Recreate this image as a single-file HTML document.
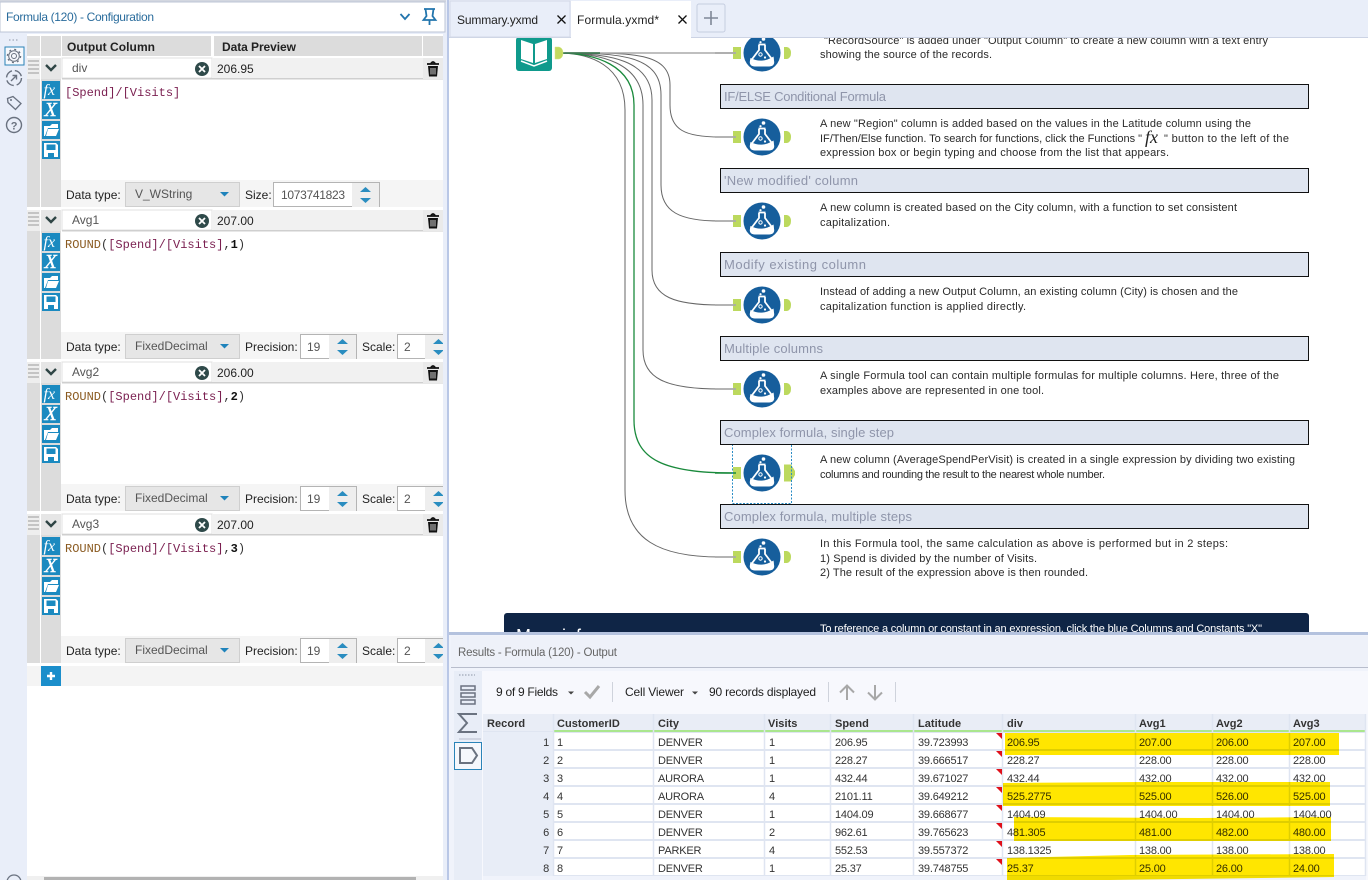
<!DOCTYPE html>
<html><head><meta charset="utf-8"><title>Formula</title>
<style>
html,body{margin:0;padding:0;background:#fff;width:1368px;height:880px;overflow:hidden}
svg{display:block}
text{font-family:"Liberation Sans",sans-serif;font-size:12px;fill:#222}
.d{font-size:11px;fill:#2a2a2a}
.h{font-size:13px;fill:#8f95aa}
.c{font-size:11px;fill:#333;letter-spacing:-.2px}
.b{font-weight:bold;font-size:11px;fill:#333;letter-spacing:.05px}
.m{font-family:"Liberation Mono",monospace;font-size:12px}
.g{fill:#555;font-size:12px}
</style></head><body>
<svg width="1368" height="880" viewBox="0 0 1368 880" xmlns="http://www.w3.org/2000/svg">
<defs>
<clipPath id="cv"><rect x="450" y="37" width="918" height="595"/></clipPath>
<clipPath id="lp"><rect x="27" y="36" width="416" height="844"/></clipPath>
<symbol id="flask" viewBox="-19 -19 38 38" width="38" height="38" overflow="visible">
<circle r="18.5" fill="#165e9c"/>
<path d="M-3 -8V-3L-11 7.500Q-12.500 12.500 -7 12.500H7Q12.500 12.500 11 7.500L3 -3V-8" fill="none" stroke="#fff" stroke-width="1.800"/>
<path d="M-3.500 -8.500H3.500" stroke="#fff" stroke-width="1.800"/>
<path d="M-11.500 5Q0 11 11.500 3.500Q13.500 13 7 13.500H-7Q-13.500 13 -11.500 5Z" fill="#fff"/>
<circle cx="1.500" cy="-14" r="1.800" fill="#fff"/><circle cx="-1.500" cy="-10.800" r="1.100" fill="#fff"/>
<circle cx="-1.500" cy="1.500" r="1.700" fill="none" stroke="#fff" stroke-width="1"/><circle cx="3" cy="4.500" r="1.100" fill="#fff"/>
</symbol>
<g id="inA"><rect x="733" y="-6" width="8" height="12" fill="#bcd95e"/></g>
<g id="outA"><path d="M784 -6H787Q791 -5 791 0Q791 5 787 6H784Z" fill="#bcd95e"/></g>
<g id="tool"><use href="#inA"/><use href="#outA"/><use href="#flask" x="743" y="-19"/><path d="M715 0H736" stroke="#aaa" stroke-width="1.800"/></g>
<g id="hdl"><rect x="27" y="0" width="13" height="21" fill="#eeeeee"/><rect x="41" y="0" width="20" height="21" fill="#e6e6e6"/>
<path d="M28 3H39M28 7H39M28 11H39M28 15H39" stroke="#c4c4c4" stroke-width="2"/>
<path d="M46 7L51 12L56 7" fill="none" stroke="#2f4545" stroke-width="2.400"/>
<rect x="62" y="0" width="150" height="20" fill="#fff" stroke="#e0e0e0"/>
<rect x="212" y="0" width="231" height="21" fill="#f1f1f1"/><rect x="62" y="20" width="381" height="1.500" fill="#cfcfcf"/>
<circle cx="202" cy="11" r="7" fill="#2f4a4a"/><path d="M199 8L205 14M205 8L199 14" stroke="#fff" stroke-width="1.800"/>
<rect x="423" y="0" width="20" height="21" fill="#eaeaea"/>
<path d="M427 6H439M431 5.500Q433 2.500 435 5.500" fill="none" stroke="#111" stroke-width="1.800"/>
<path d="M428 8H438L437 18.500H429Z" fill="#111"/><path d="M431 10V16.500M433 10V16.500M435 10V16.500" stroke="#fff" stroke-width=".8"/>
<rect x="27" y="21" width="13" height="128" fill="#dcdcdc"/><rect x="41" y="21" width="20" height="128" fill="#dcdcdc"/>
<rect x="42" y="23" width="18" height="18" fill="#1b8ac0"/><text x="43.500" y="37" style="font-family:'Liberation Serif',serif;font-style:italic;font-size:16px;fill:#fff">fx</text>
<rect x="42" y="43" width="18" height="18" fill="#1b8ac0"/><text x="44.500" y="58" style="font-family:'Liberation Serif',serif;font-style:italic;font-size:20px;fill:#fff;stroke:#fff;stroke-width:.4">X</text>
<rect x="42" y="63" width="18" height="18" fill="#1b8ac0"/><path d="M44 68H50L52 66H58V70H48L45 78H44ZM48 71H59L56 78H46Z" fill="#fff"/>
<rect x="42" y="83" width="18" height="18" fill="#1b8ac0"/><path d="M44 85H56L58 87V99H44ZM46.500 86.500V92H55.500V86.500ZM48 95V99H54V95Z" fill="#fff" fill-rule="evenodd"/>
<rect x="61" y="122" width="382" height="27" fill="#f5f5f5"/>
<text x="66" y="141">Data type:</text>
<rect x="125.500" y="124.500" width="114" height="24" fill="#e6e6e6" stroke="#cfcfcf"/><path d="M220 134H229L224.500 138.500Z" fill="#1f83bb"/>
</g>
<g id="spin"><rect x="0" y="0" width="27" height="24" fill="#eeeeee"/><path d="M8 9L13.500 4L19 9Z M8 15L13.500 20L19 15Z" fill="#2a8dc0"/></g>
<g id="fix">
<use href="#hdl"/>
<text x="135" y="140" class="g">FixedDecimal</text>
<text x="245" y="141">Precision:</text>
<rect x="300.500" y="124.500" width="56" height="24" fill="#fff" stroke="#b4b4b4"/><use href="#spin" x="329" y="125"/>
<text x="362" y="141">Scale:</text>
<rect x="397.500" y="124.500" width="56" height="24" fill="#fff" stroke="#b4b4b4"/><use href="#spin" x="425" y="125"/>
<text x="307" y="141" class="g">19</text><text x="404" y="141" class="g">2</text>
</g>
</defs>

<rect width="1368" height="880" fill="#fff"/>

<!-- left panel -->
<rect x="0" y="0" width="448" height="880" fill="#e9eef9"/>
<rect x="0" y="0" width="446" height="2" fill="#d3d7e0"/>
<rect x="0" y="2" width="445" height="30" fill="#fff" stroke="#bcc4d6"/>
<text x="6" y="21" style="fill:#2a6c9c;font-size:12px" textLength="148">Formula (120) - Configuration</text>
<path d="M400.500 14L405 19L409.500 14" fill="none" stroke="#2275ad" stroke-width="1.800"/>
<path d="M424 9H435M425.500 9L426.500 16L423.500 20H435.500L432.500 16L433.500 9M429.500 20V25" fill="none" stroke="#2275ad" stroke-width="1.800"/>
<rect x="447" y="0" width="2" height="880" fill="#b9c7e6"/>
<rect x="27" y="34" width="416" height="846" fill="#fff"/>

<!-- rail -->
<path d="M9 40H18" stroke="#8d95a6" stroke-dasharray="1.500 2"/>
<rect x="5" y="47" width="19" height="18" fill="#f7f9fd" stroke="#2a83b8"/>
<circle cx="14" cy="56" r="2.500" fill="none" stroke="#6a7280" stroke-width="1"/>
<circle cx="14" cy="56" r="6.600" fill="none" stroke="#6a7280" stroke-width="1.300" stroke-dasharray="2 3.180"/>
<circle cx="14" cy="56" r="5.300" fill="none" stroke="#6a7280" stroke-width="1"/>
<circle cx="14" cy="78" r="7.500" fill="none" stroke="#6a7280" stroke-width="1.400" stroke-dasharray="9 3" />
<path d="M11 81L16.500 75.500M12.500 75.500H16.500V79.500" fill="none" stroke="#6a7280" stroke-width="1.400"/>
<path d="M7.500 98.500L13 96.500L21 103.500L15.500 109.500L8 102.500Z" fill="none" stroke="#6a7280" stroke-width="1.300"/><circle cx="11" cy="100" r="1" fill="#6a7280"/>
<circle cx="14" cy="125" r="7.500" fill="none" stroke="#6a7280" stroke-width="1.400"/>
<text x="10.800" y="129.500" style="font-size:11px;font-weight:bold;fill:#6a7280">?</text>
<circle cx="14" cy="882" r="7" fill="none" stroke="#6a7280" stroke-width="1.300"/>

<!-- grid header -->
<rect x="27" y="36" width="13" height="20" fill="#dcdcdc"/><rect x="41" y="36" width="20" height="20" fill="#dcdcdc"/>
<rect x="62" y="36" width="149" height="20" fill="#dcdcdc"/><rect x="214" y="36" width="208" height="20" fill="#dcdcdc"/><rect x="423" y="36" width="20" height="20" fill="#dcdcdc"/>
<text x="67" y="51" style="font-weight:bold;fill:#222" textLength="88">Output Column</text>
<text x="222" y="51" style="font-weight:bold;fill:#222" textLength="74">Data Preview</text>

<g clip-path="url(#lp)">
<g transform="translate(0,58)"><use href="#hdl"/>
<text x="135" y="140" class="g">V_WString</text>
<text x="245" y="141">Size:</text>
<rect x="273.500" y="124.500" width="106" height="24" fill="#fff" stroke="#b4b4b4"/><use href="#spin" x="352" y="125"/>
<text x="281" y="141" class="g" textLength="64">1073741823</text>
<text x="72" y="14" class="g">div</text><text x="217" y="15">206.95</text>
<text x="65" y="38" class="m" style="fill:#7a1f50">[Spend]/[Visits]</text></g>

<g transform="translate(0,210)"><use href="#fix"/>
<text x="72" y="14" class="g">Avg1</text><text x="217" y="15">207.00</text>
<text x="65" y="38" class="m" style="fill:#7a1f50"><tspan style="fill:#8a5a20">ROUND</tspan><tspan style="fill:#333">(</tspan>[Spend]/[Visits]<tspan style="fill:#333">,</tspan><tspan style="fill:#111;font-weight:bold">1</tspan><tspan style="fill:#333">)</tspan></text></g>

<g transform="translate(0,362)"><use href="#fix"/>
<text x="72" y="14" class="g">Avg2</text><text x="217" y="15">206.00</text>
<text x="65" y="38" class="m" style="fill:#7a1f50"><tspan style="fill:#8a5a20">ROUND</tspan><tspan style="fill:#333">(</tspan>[Spend]/[Visits]<tspan style="fill:#333">,</tspan><tspan style="fill:#111;font-weight:bold">2</tspan><tspan style="fill:#333">)</tspan></text></g>

<g transform="translate(0,514)"><use href="#fix"/>
<text x="72" y="14" class="g">Avg3</text><text x="217" y="15">207.00</text>
<text x="65" y="38" class="m" style="fill:#7a1f50"><tspan style="fill:#8a5a20">ROUND</tspan><tspan style="fill:#333">(</tspan>[Spend]/[Visits]<tspan style="fill:#333">,</tspan><tspan style="fill:#111;font-weight:bold">3</tspan><tspan style="fill:#333">)</tspan></text></g>

<rect x="27" y="666" width="416" height="20" fill="#f4f4f4"/>
<rect x="41" y="666" width="20" height="20" fill="#1b8ecb"/><path d="M51 672V680M47 676H55" stroke="#fff" stroke-width="2.400"/>
<rect x="27" y="876" width="416" height="4" fill="#f0f0f0"/><rect x="44" y="877" width="372" height="3" fill="#b2b2b2"/>
</g>

<!-- canvas -->
<g clip-path="url(#cv)">
<g fill="none" stroke="#666" stroke-width="1">
<path d="M558 53C625 53 670 50 670 85V105C670 130 685 137 720 137"/>
<path d="M558 53C620 53 661 55 661 95V185C661 212 680 221 720 221"/>
<path d="M558 53C610 53 652 60 652 100V270C652 297 675 305 720 305"/>
<path d="M558 53C600 53 643 62 643 105V350C643 378 665 389 720 389"/>
<path d="M558 53C590 53 625 65 625 110V490C625 540 660 557 720 557"/>
<path d="M558 53C595 53 634 65 634 105V420C634 460 665 473 733 473" stroke="#1a8a3c" stroke-width="1.300"/>
<path d="M565 53H735" stroke="#aaa" stroke-width="1.600"/>
<path d="M562 53H600" stroke="#2e7045" stroke-width="1.600"/>
</g>
<rect x="516" y="37" width="36" height="34" rx="3" fill="#0f9a8c"/>
<path d="M533 44L521 40V59L533 63ZM535 44L547 40V59L535 63Z" fill="#fff"/>
<path d="M521 61L534 66L547 61" fill="none" stroke="#fff" stroke-width="1.500"/>
<path d="M555 47H559Q563 48 563 53Q563 58 559 59H555Z" fill="#c3da5f" stroke="#d6e68a" stroke-width=".5"/>

<use href="#tool" transform="translate(0,53)"/>
<use href="#tool" transform="translate(0,137)"/>
<use href="#tool" transform="translate(0,221)"/>
<use href="#tool" transform="translate(0,305)"/>
<use href="#tool" transform="translate(0,389)"/>
<use href="#tool" transform="translate(0,557)"/>
<g transform="translate(0,473)"><use href="#inA"/><path d="M784 -8.500H791L795 -2V2L791 8.500H784Z" fill="#bcd95e"/><use href="#flask" x="743" y="-19"/></g>
<path d="M715 473H736" stroke="#1a8a3c" stroke-width="1.600"/>
<rect x="732.500" y="444.500" width="59" height="59" fill="none" stroke="#2a8cc5" stroke-dasharray="2 1.500"/>

<g fill="#dfe5f0" stroke="#111">
<rect x="720.500" y="84.500" width="588" height="24"/>
<rect x="720.500" y="168.500" width="588" height="24"/>
<rect x="720.500" y="252.500" width="588" height="24"/>
<rect x="720.500" y="336.500" width="588" height="24"/>
<rect x="720.500" y="420.500" width="588" height="24"/>
<rect x="720.500" y="504.500" width="588" height="24"/>
</g>
<text x="724" y="101" class="h" textLength="162">IF/ELSE Conditional Formula</text>
<text x="724" y="185" class="h" textLength="134">'New modified' column</text>
<text x="724" y="269" class="h" textLength="142">Modify existing column</text>
<text x="724" y="353" class="h" textLength="99">Multiple columns</text>
<text x="724" y="437" class="h" textLength="170">Complex formula, single step</text>
<text x="724" y="521" class="h" textLength="188">Complex formula, multiple steps</text>

<text x="824" y="44" class="d" textLength="444">"RecordSource" is added under "Output Column" to create a new column with a text entry</text>
<text x="820" y="58" class="d" textLength="172">showing the source of the records.</text>
<text x="820" y="127" class="d" textLength="431">A new "Region" column is added based on the values in the Latitude column using the</text>
<text x="820" y="142" class="d" textLength="322">IF/Then/Else function. To search for functions, click the Functions "</text>
<text x="1145" y="143" style="font-family:'Liberation Serif',serif;font-style:italic;font-size:18px;fill:#222">fx</text>
<text x="1164" y="142" class="d" textLength="125">" button to the left of the</text>
<text x="820" y="156" class="d" textLength="349">expression box or begin typing and choose from the list that appears.</text>
<text x="820" y="211" class="d" textLength="417">A new column is created based on the City column, with a function to set consistent</text>
<text x="820" y="226" class="d" textLength="70">capitalization.</text>
<text x="820" y="295" class="d" textLength="418">Instead of adding a new Output Column, an existing column (City) is chosen and the</text>
<text x="820" y="310" class="d" textLength="206">capitalization function is applied directly.</text>
<text x="820" y="379" class="d" textLength="459">A single Formula tool can contain multiple formulas for multiple columns. Here, three of the</text>
<text x="820" y="394" class="d" textLength="224">examples above are represented in one tool.</text>
<text x="820" y="463" class="d" textLength="475">A new column (AverageSpendPerVisit) is created in a single expression by dividing two existing</text>
<text x="820" y="478" class="d" textLength="285">columns and rounding the result to the nearest whole number.</text>
<text x="820" y="547" class="d" textLength="408">In this Formula tool, the same calculation as above is performed but in 2 steps:</text>
<text x="820" y="562" class="d" textLength="217">1) Spend is divided by the number of Visits.</text>
<text x="820" y="576" class="d" textLength="268">2) The result of the expression above is then rounded.</text>

<rect x="504" y="613" width="805" height="30" rx="3" fill="#0f2546"/>
<text x="516" y="642" style="font-size:18px;fill:#fff">More info</text>
<text x="820" y="632" class="d" style="fill:#fff" textLength="442">To reference a column or constant in an expression, click the blue Columns and Constants "X"</text>
</g>

<!-- tabs -->
<rect x="449" y="0" width="919" height="37" fill="#e9eef9"/>
<rect x="449" y="37" width="919" height="1" fill="#ccd3e4"/>
<rect x="450" y="1" width="120" height="36" fill="#e9eef9" stroke="#d2d8e6"/>
<rect x="571" y="1" width="120" height="37" fill="#fff"/>
<text x="457" y="24" textLength="81">Summary.yxmd</text>
<text x="577" y="24" textLength="82">Formula.yxmd*</text>
<path d="M557.500 15.500L565.500 23.500M565.500 15.500L557.500 23.500" stroke="#111" stroke-width="1.300"/>
<path d="M678.500 15.500L686.500 23.500M686.500 15.500L678.500 23.500" stroke="#111" stroke-width="1.300"/>
<rect x="697" y="4" width="28" height="28" rx="2" fill="#e9eef9" stroke="#c5cde0"/>
<path d="M711 11V25M704 18H718" stroke="#7f8797" stroke-width="1.600"/>

<!-- results -->
<rect x="449" y="632" width="919" height="3" fill="#b4c2de"/>
<rect x="449" y="635" width="919" height="245" fill="#f0f3fb"/>
<rect x="451" y="636" width="917" height="31" fill="#eef1f9"/><rect x="451" y="667" width="917" height="1" fill="#b8bdcc"/>
<text x="458" y="656" style="fill:#666;font-size:11.500px" textLength="159">Results - Formula (120) - Output</text>
<rect x="454" y="671" width="914" height="209" fill="#f7f8fd"/>
<rect x="454" y="671" width="28" height="209" fill="#e8edf7"/>
<path d="M459 675H475" stroke="#8d95a6" stroke-dasharray="1.500 1.500"/>
<g fill="none" stroke="#6a7280" stroke-width="1.500">
<rect x="461" y="686" width="14" height="4"/><rect x="461" y="693" width="14" height="4"/><rect x="461" y="700" width="14" height="4"/>
<path d="M477 714H459L467 723L459 732H477" stroke-width="2"/>
</g>
<path d="M459 739H481" stroke="#b8bdcc"/>
<rect x="454.500" y="742.500" width="27" height="27" fill="#f5f7fc" stroke="#2a83b8"/>
<path d="M460 748H472L477 755.500L472 763H460Z" fill="none" stroke="#6a7280" stroke-width="2"/>
<text x="496" y="696" textLength="62">9 of 9 Fields</text>
<path d="M568 691.500H574L571 694.500Z" fill="#444"/>
<path d="M585 692L590 697L599 686" fill="none" stroke="#a8a8a8" stroke-width="3"/>
<path d="M612.500 682V702M828.500 682V702M895.500 682V702" stroke="#cfd3dc"/>
<text x="625" y="696" textLength="59">Cell Viewer</text>
<path d="M692 691.500H698L695 694.500Z" fill="#444"/>
<text x="709" y="696" textLength="107">90 records displayed</text>
<path d="M847 700V686M840 692.500L847 685.500L854 692.500M875 685V699M868 692.500L875 699.500L882 692.500" fill="none" stroke="#a8a8a8" stroke-width="2"/>

<!-- table -->
<rect x="483" y="714" width="883" height="166" fill="#dfe5f1"/>
<rect x="483" y="714" width="883" height="17" fill="#e9edf6"/>
<rect x="554" y="730" width="811" height="2" fill="#aae68e"/>
<rect x="483" y="732" width="70" height="148" fill="#e8edf7"/>
<g fill="#fff">
<rect x="554" y="733" width="812" height="16"/><rect x="554" y="751" width="812" height="16"/><rect x="554" y="769" width="812" height="16"/><rect x="554" y="787" width="812" height="16"/><rect x="554" y="805" width="812" height="16"/><rect x="554" y="823" width="812" height="16"/><rect x="554" y="841" width="812" height="16"/><rect x="554" y="859" width="812" height="16"/>
</g>
<rect x="483" y="876" width="883" height="4" fill="#f0f3fb"/>
<path d="M553.500 714V876M653.500 714V876M764.500 714V876M830.500 714V876M913.500 714V876M1002.500 714V876M1135.500 714V876M1212.500 714V876M1289.500 714V876M1365.500 714V876" stroke="#dfe5f1" stroke-width="1.500"/>
<path d="M996 733H1002V739ZM996 751H1002V757ZM996 769H1002V775ZM996 787H1002V793ZM996 805H1002V811ZM996 823H1002V829ZM996 841H1002V847ZM996 859H1002V865Z" fill="#e0101a"/>

<g class="hdr">
<text x="487" y="727" class="b">Record</text><text x="557" y="727" class="b">CustomerID</text><text x="658" y="727" class="b">City</text><text x="768" y="727" class="b">Visits</text><text x="835" y="727" class="b">Spend</text><text x="918" y="727" class="b">Latitude</text><text x="1007" y="727" class="b">div</text><text x="1139" y="727" class="b">Avg1</text><text x="1216" y="727" class="b">Avg2</text><text x="1293" y="727" class="b">Avg3</text>
</g>

<g text-anchor="end">
<text x="549" y="746" class="c">1</text><text x="549" y="764" class="c">2</text><text x="549" y="782" class="c">3</text><text x="549" y="800" class="c">4</text><text x="549" y="818" class="c">5</text><text x="549" y="836" class="c">6</text><text x="549" y="854" class="c">7</text><text x="549" y="872" class="c">8</text>
</g>
<g>
<text x="557" y="746" class="c">1</text><text x="658" y="746" class="c">DENVER</text><text x="769" y="746" class="c">1</text><text x="835" y="746" class="c">206.95</text><text x="918" y="746" class="c">39.723993</text><text x="1007" y="746" class="c">206.95</text><text x="1139" y="746" class="c">207.00</text><text x="1216" y="746" class="c">206.00</text><text x="1293" y="746" class="c">207.00</text>
<text x="557" y="764" class="c">2</text><text x="658" y="764" class="c">DENVER</text><text x="769" y="764" class="c">1</text><text x="835" y="764" class="c">228.27</text><text x="918" y="764" class="c">39.666517</text><text x="1007" y="764" class="c">228.27</text><text x="1139" y="764" class="c">228.00</text><text x="1216" y="764" class="c">228.00</text><text x="1293" y="764" class="c">228.00</text>
<text x="557" y="782" class="c">3</text><text x="658" y="782" class="c">AURORA</text><text x="769" y="782" class="c">1</text><text x="835" y="782" class="c">432.44</text><text x="918" y="782" class="c">39.671027</text><text x="1007" y="782" class="c">432.44</text><text x="1139" y="782" class="c">432.00</text><text x="1216" y="782" class="c">432.00</text><text x="1293" y="782" class="c">432.00</text>
<text x="557" y="800" class="c">4</text><text x="658" y="800" class="c">AURORA</text><text x="769" y="800" class="c">4</text><text x="835" y="800" class="c">2101.11</text><text x="918" y="800" class="c">39.649212</text><text x="1007" y="800" class="c">525.2775</text><text x="1139" y="800" class="c">525.00</text><text x="1216" y="800" class="c">526.00</text><text x="1293" y="800" class="c">525.00</text>
<text x="557" y="818" class="c">5</text><text x="658" y="818" class="c">DENVER</text><text x="769" y="818" class="c">1</text><text x="835" y="818" class="c">1404.09</text><text x="918" y="818" class="c">39.668677</text><text x="1007" y="818" class="c">1404.09</text><text x="1139" y="818" class="c">1404.00</text><text x="1216" y="818" class="c">1404.00</text><text x="1293" y="818" class="c">1404.00</text>
<text x="557" y="836" class="c">6</text><text x="658" y="836" class="c">DENVER</text><text x="769" y="836" class="c">2</text><text x="835" y="836" class="c">962.61</text><text x="918" y="836" class="c">39.765623</text><text x="1007" y="836" class="c">481.305</text><text x="1139" y="836" class="c">481.00</text><text x="1216" y="836" class="c">482.00</text><text x="1293" y="836" class="c">480.00</text>
<text x="557" y="854" class="c">7</text><text x="658" y="854" class="c">PARKER</text><text x="769" y="854" class="c">4</text><text x="835" y="854" class="c">552.53</text><text x="918" y="854" class="c">39.557372</text><text x="1007" y="854" class="c">138.1325</text><text x="1139" y="854" class="c">138.00</text><text x="1216" y="854" class="c">138.00</text><text x="1293" y="854" class="c">138.00</text>
<text x="557" y="872" class="c">8</text><text x="658" y="872" class="c">DENVER</text><text x="769" y="872" class="c">1</text><text x="835" y="872" class="c">25.37</text><text x="918" y="872" class="c">39.748755</text><text x="1007" y="872" class="c">25.37</text><text x="1139" y="872" class="c">25.00</text><text x="1216" y="872" class="c">26.00</text><text x="1293" y="872" class="c">24.00</text>
</g>
<g style="mix-blend-mode:multiply" fill="#ffe600">
<path d="M1005 733H1339V755H1005Z"/>
<path d="M1003 783L1150 782H1330V806H1003Z"/>
<path d="M1014 817L1200 818L1331 817V841H1014Z"/>
<path d="M1007 858L1130 855L1334 854V877L1110 880H1007Z"/>
</g>
</svg>
</body></html>
